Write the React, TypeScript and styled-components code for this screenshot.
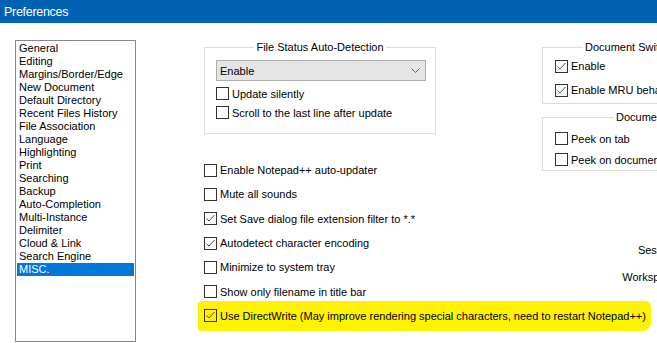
import React, { FC } from 'react';
import styled, { createGlobalStyle } from 'styled-components';

const UI_FONT = `'Liberation Sans', Arial, sans-serif`;

const GlobalStyle = createGlobalStyle`
    html, body {
        margin: 0;
        padding: 0;
        background: #ffffff;
    }
    body {
        font-family: ${UI_FONT};
        font-size: 11px;
        color: #000000;
    }
`;

const Window = styled.div`
    width: 657px;
    height: 343px;
    overflow: hidden;
    background: #ffffff;
    display: flex;
    flex-direction: column;
`;

const TitleBar = styled.div`
    height: 23px;
    flex: none;
    background: #0063b1;
    color: #ffffff;
    font-size: 12.5px;
    letter-spacing: -0.3px;
    display: flex;
    align-items: center;
    padding-left: 4px;
`;

const Content = styled.div`
    display: flex;
    align-items: flex-start;
    flex: 1;
`;

const CategoryList = styled.ul`
    list-style: none;
    margin: 17px 0 0 15px;
    padding: 1px;
    width: 117px;
    height: 298px;
    flex: none;
    border: 1px solid #828790;
`;

const CategoryItem = styled.li<{ $selected?: boolean }>`
    height: 13px;
    line-height: 13px;
    padding-left: 2px;
    white-space: nowrap;
    background: ${(p) => (p.$selected ? '#0078d7' : 'transparent')};
    color: ${(p) => (p.$selected ? '#ffffff' : '#000000')};
`;

const MainColumn = styled.div`
    margin: 17px 0 0 68px;
    width: 232px;
    flex: none;
    white-space: nowrap;
`;

const SideColumn = styled.div`
    margin: 17px 0 0 106px;
    width: 230px;
    flex: none;
    white-space: nowrap;
`;

const GroupBox = styled.fieldset<{ $width: number; $gap?: number; $pad: string }>`
    margin: ${(p) => p.$gap ?? 0}px 0 0 0;
    width: ${(p) => p.$width}px;
    box-sizing: border-box;
    border: 1px solid #dcdcdc;
    padding: ${(p) => p.$pad};
    min-width: 0;
`;

const GroupTitle = styled.legend<{ $offset?: number }>`
    padding: 0 2px;
    line-height: 14px;
    margin: ${(p) => (p.$offset === undefined ? '0 auto' : `0 0 0 ${p.$offset}px`)};
`;

const Dropdown = styled.div`
    height: 21px;
    box-sizing: border-box;
    width: 210px;
    border: 1px solid #adadad;
    background: #e5e5e5;
    display: flex;
    align-items: center;
    justify-content: space-between;
    padding: 0 5px 0 3px;
    margin-bottom: 3px;
`;

const CheckRow = styled.div<{ $height: number }>`
    height: ${(p) => p.$height}px;
    display: flex;
    align-items: center;
    gap: 3px;
`;

const Highlight = styled.div`
    background: #fff200;
    border-radius: 4px 6px 8px 3px;
    margin: -3px 0 0 -6px;
    padding: 3px 0 3px 6px;
    width: 447px;
`;

const Box = styled.span`
    width: 13px;
    height: 13px;
    box-sizing: border-box;
    border: 1px solid #333333;
    flex: none;
    display: flex;
    align-items: center;
    justify-content: center;
`;

const OptionList = styled.div`
    margin-top: 24px;
`;

const FieldLabels = styled.div`
    margin-top: 72px;
    width: 176px;
    text-align: right;
    display: flex;
    flex-direction: column;
    gap: 12px;
    line-height: 15px;
`;

const Check: FC<{ label: string; checked?: boolean; height?: number }> = ({
    label,
    checked,
    height = 24.3,
}) => (
    <CheckRow $height={height}>
        <Box>
            {checked && (
                <svg width="11" height="11" viewBox="0 0 11 11">
                    <polyline points="1.5,5.5 4,8 9.5,2" fill="none" stroke="#555555" strokeWidth="1" />
                </svg>
            )}
        </Box>
        <span>{label}</span>
    </CheckRow>
);

const categories = [
    'General',
    'Editing',
    'Margins/Border/Edge',
    'New Document',
    'Default Directory',
    'Recent Files History',
    'File Association',
    'Language',
    'Highlighting',
    'Print',
    'Searching',
    'Backup',
    'Auto-Completion',
    'Multi-Instance',
    'Delimiter',
    'Cloud & Link',
    'Search Engine',
    'MISC.',
];

const options = [
    { label: 'Enable Notepad++ auto-updater', checked: false },
    { label: 'Mute all sounds', checked: false },
    { label: 'Set Save dialog file extension filter to *.*', checked: true },
    { label: 'Autodetect character encoding', checked: true },
    { label: 'Minimize to system tray', checked: false },
    { label: 'Show only filename in title bar', checked: false },
];

export default function App() {
    return (
        <>
            <GlobalStyle />
            <Window>
                <TitleBar>Preferences</TitleBar>
                <Content>
                    <CategoryList>
                        {categories.map((c) => (
                            <CategoryItem key={c} $selected={c === 'MISC.'}>
                                {c}
                            </CategoryItem>
                        ))}
                    </CategoryList>

                    <MainColumn>
                        <GroupBox $width={232} $pad="6px 11px 11px 11px">
                            <GroupTitle>File Status Auto-Detection</GroupTitle>
                            <Dropdown>
                                <span>Enable</span>
                                <svg width="9" height="5" viewBox="0 0 9 5">
                                    <polyline points="0.5,0.5 4.5,4.5 8.5,0.5" fill="none" stroke="#606060" strokeWidth="1" />
                                </svg>
                            </Dropdown>
                            <Check label="Update silently" height={19} />
                            <Check label="Scroll to the last line after update" height={19} />
                        </GroupBox>

                        <OptionList>
                            {options.map((o) => (
                                <Check key={o.label} label={o.label} checked={o.checked} />
                            ))}
                            <Highlight>
                                <Check
                                    label="Use DirectWrite (May improve rendering special characters, need to restart Notepad++)"
                                    checked
                                />
                            </Highlight>
                        </OptionList>
                    </MainColumn>

                    <SideColumn>
                        <GroupBox $width={230} $pad="0 12px 1px 12px">
                            <GroupTitle $offset={28}>Document Switcher</GroupTitle>
                            <Check label="Enable" checked height={24} />
                            <Check label="Enable MRU behaviour" checked height={24} />
                        </GroupBox>
                        <GroupBox $width={230} $gap={6} $pad="4px 12px 0 12px">
                            <GroupTitle $offset={59}>Document Peeker</GroupTitle>
                            <Check label="Peek on tab" height={21} />
                            <Check label="Peek on document map" height={21} />
                        </GroupBox>
                        <FieldLabels>
                            <span>Session file ext.:</span>
                            <span>Workspace file ext.:</span>
                        </FieldLabels>
                    </SideColumn>
                </Content>
            </Window>
        </>
    );
}
